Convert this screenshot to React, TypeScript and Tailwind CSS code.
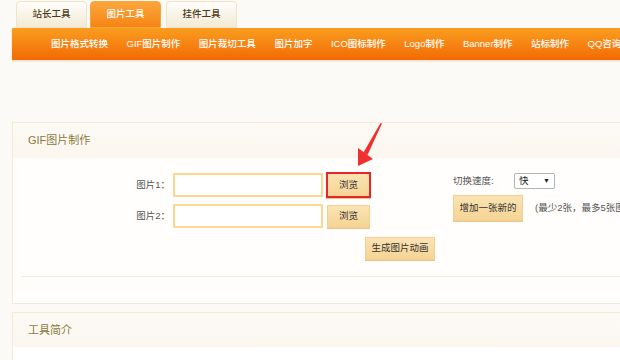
import React from 'react'

const NAV = ['图片格式转换', 'GIF图片制作', '图片裁切工具', '图片加字', 'ICO图标制作', 'Logo制作', 'Banner制作', '站标制作', 'QQ咨询客服']

const font = { fontFamily: '"Liberation Sans", "Noto Sans CJK SC", sans-serif' }

function Btn({ children, className = '' }: { children: React.ReactNode; className?: string }) {
  return (
    <button
      type="button"
      className={`flex items-center justify-center bg-gradient-to-b from-[#fbe3b3] to-[#f6d494] border border-[#f1cf93] text-[9.5px] text-[#333] shadow-[0_1px_0_#e8c689] ${className}`}
    >
      {children}
    </button>
  )
}

function Tab({ label, active = false, className = '' }: { label: string; active?: boolean; className?: string }) {
  return (
    <div
      className={`h-[27px] w-[71px] rounded-t-[4px] flex items-center justify-center text-[9.5px] font-medium border ${
        active
          ? 'bg-gradient-to-b from-[#fba63a] to-[#f58410] border-[#f7a43f] text-white'
          : 'bg-gradient-to-b from-[#fffefb] to-[#f3ead5] border-[#efe3c8] text-[#4a3c20]'
      } ${className}`}
    >
      {label}
    </div>
  )
}

export default function App() {
  return (
    <div className="relative w-[620px] h-[360px] overflow-hidden bg-[#fcfaf6]" style={font}>
      <div className="w-[1000px]">
        {/* top tabs */}
        <div className="flex pt-[1px] pl-[16px]">
          <Tab label="站长工具" />
          <Tab label="图片工具" active className="ml-[3px]" />
          <Tab label="挂件工具" className="ml-[5px] w-[70px]" />
        </div>

        {/* orange nav */}
        <div className="ml-[12px] h-[32px] bg-gradient-to-b from-[#f99d1e] to-[#f26a04] shadow-[0_1px_2px_#f3d2b0] flex items-center pl-[39px] gap-[18.5px] text-white text-[9.5px] font-medium">
          {NAV.map(n => (
            <span key={n}>{n}</span>
          ))}
        </div>

        {/* GIF panel */}
        <div className="ml-[12px] mt-[62px] border border-[#f6e8d4] bg-white">
          <div className="h-[35px] flex items-center pl-[15px] bg-gradient-to-b from-[#fcfaf5] to-[#fbf7ef] text-[11px] text-[#8a7a40]">
            GIF图片制作
          </div>
          <div className="flex pt-[14px] pl-[120px] bg-[#fffefc]">
            <div className="w-[320px]">
              <div className="flex items-center">
                <span className="w-[37px] text-right text-[9.5px] text-[#555]">图片1：</span>
                <input className="ml-[3px] w-[150px] h-[24px] border-2 border-[#fbd792] bg-white outline-none" />
                <Btn className="ml-[3px] w-[45px] h-[26px] !border-2 !border-[#e8262a]">浏览</Btn>
              </div>
              <div className="flex items-center mt-[6px]">
                <span className="w-[37px] text-right text-[9.5px] text-[#555]">图片2：</span>
                <input className="ml-[3px] w-[150px] h-[24px] border-2 border-[#fbd792] bg-white outline-none" />
                <Btn className="ml-[4px] w-[43px] h-[23px]">浏览</Btn>
              </div>
              <Btn className="ml-[232px] mt-[9px] w-[70px] h-[23px]">生成图片动画</Btn>
            </div>
            <div>
              <div className="flex items-center pt-[1px]">
                <span className="w-[61px] text-[9.5px] text-[#555]">切换速度:</span>
                <div className="w-[41px] h-[16px] border border-[#b5b5b5] rounded-[2px] bg-white flex items-center justify-between px-[4px] text-[9.5px] text-[#222]">
                  <span>快</span>
                  <span className="text-[7px]">▼</span>
                </div>
              </div>
              <div className="flex items-center mt-[6px]">
                <Btn className="w-[70px] h-[26px]">增加一张新的</Btn>
                <span className="ml-[12px] text-[9.5px] text-[#555]">(最少2张，最多5张图片)</span>
              </div>
            </div>
          </div>
          <div className="bg-[#fffefc] pl-[8px] pt-[16px] pb-[26px]">
            <div className="border-t border-[#f7ead8]" />
          </div>
        </div>

        {/* intro panel */}
        <div className="ml-[12px] mt-[8px] border border-[#f6e8d4] bg-white h-[60px]">
          <div className="h-[34px] flex items-center pl-[15px] bg-gradient-to-b from-[#fcfaf5] to-[#fbf7ef] text-[11px] text-[#8a7a40]">
            工具简介
          </div>
        </div>
      </div>

      {/* red arrow overlay */}
      <svg className="absolute left-[350px] top-[118px]" width="40" height="52" viewBox="0 0 40 52">
        <polygon points="30.5,5 32,5.6 17.5,37 13.5,34.5" fill="#f0302f" />
        <polygon points="8,48 8,30 23,41" fill="#f0302f" />
      </svg>
    </div>
  )
}
